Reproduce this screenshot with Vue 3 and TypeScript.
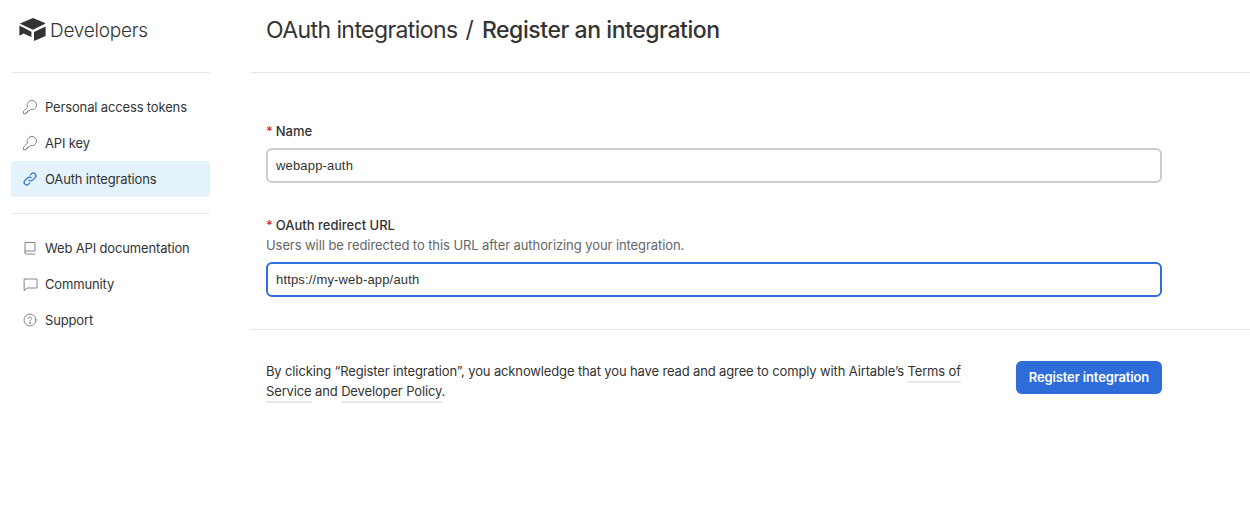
<script setup lang="ts">
const topItems = [
  { label: 'Personal access tokens', icon: 'key', active: false },
  { label: 'API key', icon: 'key', active: false },
  { label: 'OAuth integrations', icon: 'link', active: true },
]
const bottomItems = [
  { label: 'Web API documentation', icon: 'book', active: false },
  { label: 'Community', icon: 'chat', active: false },
  { label: 'Support', icon: 'help', active: false },
]
</script>

<template>
  <div class="page">
    <aside class="sidebar">
      <div class="brand">
        <svg class="logo" width="28" height="24" viewBox="0 0 28 24">
          <path d="M14 0 L26 5 Q26.6 5.4 26 5.8 L14.6 11.6 Q14 11.9 13.4 11.6 L1.6 6 Q1 5.6 1.6 5.2 Z" fill="#333" />
          <path d="M0.4 7.6 L12.4 13.8 L12.4 19 L4.6 15.6 L0.4 17.8 Z" fill="#333" />
          <path d="M15 14 L26.6 8.4 L26.6 18 L15 23 Z" fill="#333" />
        </svg>
        <span class="brand-text">Developers</span>
      </div>
      <div class="rule"></div>
      <nav class="group first">
        <a v-for="item in topItems" :key="item.label" class="item" :class="{ active: item.active }">
          <svg class="icon" width="16" height="16" viewBox="0 0 16 16" fill="none" stroke="currentColor" stroke-width="0.9" stroke-linecap="round" stroke-linejoin="round">
            <template v-if="item.icon === 'key'">
              <path d="M10 1.4 a4.6 4.6 0 1 1 -1.4 9 L7 12 H5.5 V13.4 H4 V14.8 H1.4 V12.2 L5.6 8 A4.6 4.6 0 0 1 10 1.4 Z" />
            </template>
            <template v-else>
              <path d="M6.8 9.2 a2.6 2.6 0 0 0 3.7 0 l2.6 -2.6 a2.6 2.6 0 0 0 -3.7 -3.7 L8.2 4.1" stroke-width="1.2" />
              <path d="M9.2 6.8 a2.6 2.6 0 0 0 -3.7 0 l-2.6 2.6 a2.6 2.6 0 0 0 3.7 3.7 L7.8 11.9" stroke-width="1.2" />
            </template>
          </svg>
          <span>{{ item.label }}</span>
        </a>
      </nav>
      <div class="rule"></div>
      <nav class="group second">
        <a v-for="item in bottomItems" :key="item.label" class="item">
          <svg class="icon" width="16" height="16" viewBox="0 0 16 16" fill="none" stroke="currentColor" stroke-width="0.9" stroke-linecap="round" stroke-linejoin="round">
            <template v-if="item.icon === 'book'">
              <path d="M3 12.5 V2.5 H13 V11 H4.5 A1.5 1.5 0 0 0 3 12.5 A1.5 1.5 0 0 0 4.5 14 H13" />
            </template>
            <template v-else-if="item.icon === 'chat'">
              <path d="M2.5 3 H15 V12 H5 L2.5 14.5 Z" />
            </template>
            <template v-else>
              <circle cx="8" cy="8" r="6" />
              <path d="M6.4 6.5 a1.6 1.6 0 1 1 2.4 1.4 C8.2 8.3 8 8.6 8 9.2" />
              <circle cx="8" cy="11" r="0.4" fill="currentColor" />
            </template>
          </svg>
          <span>{{ item.label }}</span>
        </a>
      </nav>
    </aside>

    <main class="main">
      <header class="head">
        <h1 class="title"><span class="crumb">OAuth integrations</span><span class="slash">/</span><span class="current">Register an integration</span></h1>
      </header>

      <section class="form">
        <div class="field name-field">
          <label class="label"><span class="req">*</span>Name</label>
          <div class="input">webapp-auth</div>
        </div>
        <div class="field url-field">
          <label class="label"><span class="req">*</span>OAuth redirect URL</label>
          <p class="help">Users will be redirected to this URL after authorizing your integration.</p>
          <div class="input focused">https://my-web-app/auth</div>
        </div>
      </section>

      <footer class="foot">
        <p class="legal">By clicking “Register integration”, you acknowledge that you have read and agree to comply with Airtable’s <a class="link">Terms of</a> <a class="link">Service</a> and <a class="link">Developer Policy</a>.</p>
        <button class="submit" type="button">Register integration</button>
      </footer>
    </main>
  </div>
</template>

<style>
html, body { margin: 0; background: #fff; }
</style>

<style scoped>
.page {
  display: flex;
  width: 1250px;
  height: 511px;
  overflow: hidden;
  background: #fff;
  color: #333;
  font-family: Inter, "Liberation Sans", sans-serif;
  font-size: 13px;
}
.sidebar {
  width: 199px;
  padding-left: 11px;
  padding-right: 40px;
  flex: none;
}
.brand {
  height: 72px;
  box-sizing: border-box;
  display: flex;
  align-items: center;
  padding: 0 0 12px 8px;
  gap: 3px;
}
.logo { flex: none; }
.brand-text {
  font-size: 19px;
  font-weight: 300;
  letter-spacing: -0.25px;
  color: #333;
}
.rule { height: 1px; background: #e8e8e8; }
.group { display: flex; flex-direction: column; }
.group.first { padding: 16px 0; }
.group.second { padding-top: 16px; }
.item {
  display: flex;
  align-items: center;
  height: 36px;
  padding-left: 11px;
  gap: 7px;
  border-radius: 3px;
  color: #333;
  letter-spacing: -0.15px;
}
.item .icon { color: #777; flex: none; }
.item.active { background: #e3f2fb; }
.item.active .icon { color: #2d6fdc; }
.main { flex: 1; min-width: 0; }
.head {
  height: 73px;
  box-sizing: border-box;
  padding: 0 0 13px 16px;
  display: flex;
  align-items: center;
  border-bottom: 1px solid #e8e8e8;
}
.title {
  margin: 0;
  font-size: 23px;
  font-weight: 400;
  color: #333;
  display: flex;
}
.crumb { letter-spacing: -0.58px; }
.slash { margin: 0 8px 0 8px; }
.current { font-weight: 500; letter-spacing: -0.44px; }
.form { padding: 50px 88px 32px 16px; }
.field { display: flex; flex-direction: column; }
.url-field { margin-top: 34px; }
.label { font-weight: 500; line-height: 16px; margin-bottom: 9px; }
.url-field .label { margin-bottom: 4px; }
.req { color: #d9283a; margin-right: 3px; }
.help { margin: 0 0 9px; color: #666; line-height: 16px; letter-spacing: -0.08px; }
.input {
  box-sizing: border-box;
  height: 35px;
  line-height: 31px;
  padding: 0 8px;
  border: 2px solid #ccc;
  border-radius: 6px;
  color: #333;
  font-family: "Liberation Sans", Inter, sans-serif;
  font-size: 13px;
  letter-spacing: 0.17px;
}
.input.focused { border-color: #2d6fdc; }
.foot {
  border-top: 1px solid #e8e8e8;
  padding: 31px 88px 0 16px;
  display: flex;
  justify-content: space-between;
  align-items: flex-start;
}
.legal {
  margin: 0;
  width: 700px;
  line-height: 20px;
  color: #333;
  letter-spacing: -0.135px;
}
.link { border-bottom: 2px solid #e8e8e8; padding-bottom: 2px; }
.submit {
  flex: none;
  width: 146px;
  height: 33px;
  border: 0;
  padding: 0 0 2px;
  border-radius: 6px;
  background: #2d6cd9;
  color: #fff;
  font: 600 13px Inter, "Liberation Sans", sans-serif;
  letter-spacing: -0.15px;
  box-shadow: 0 0 1px rgba(0,0,0,.3);
}
</style>
